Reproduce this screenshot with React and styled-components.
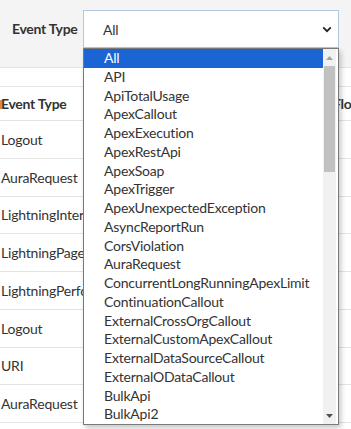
import React from "react";
import styled, { createGlobalStyle } from "styled-components";

const GlobalStyle = createGlobalStyle`
  html, body {
    margin: 0;
    padding: 0;
    background: #ffffff;
  }
  body {
    font-family: "Source Sans Pro", Lato, "Liberation Sans", sans-serif;
    color: #333333;
    overflow: hidden;
  }
`;

const options = [
  "All",
  "API",
  "ApiTotalUsage",
  "ApexCallout",
  "ApexExecution",
  "ApexRestApi",
  "ApexSoap",
  "ApexTrigger",
  "ApexUnexpectedException",
  "AsyncReportRun",
  "CorsViolation",
  "AuraRequest",
  "ConcurrentLongRunningApexLimit",
  "ContinuationCallout",
  "ExternalCrossOrgCallout",
  "ExternalCustomApexCallout",
  "ExternalDataSourceCallout",
  "ExternalODataCallout",
  "BulkApi",
  "BulkApi2",
];

const rows = [
  "Logout",
  "AuraRequest",
  "LightningInteraction",
  "LightningPageView",
  "LightningPerformance",
  "Logout",
  "URI",
  "AuraRequest",
];

const Chevron = () => (
  <svg width="10" height="7" viewBox="0 0 10 7">
    <path d="M1.2 1.4 L5 5.2 L8.8 1.4" fill="none" stroke="#222" strokeWidth="1.8" />
  </svg>
);

const Arrow = ({ down }) => (
  <svg width="7" height="4" viewBox="0 0 7 4">
    <path d={down ? "M0 0 L7 0 L3.5 4 Z" : "M0 4 L7 4 L3.5 0 Z"} fill={down ? "#505050" : "#a3a3a3"} />
  </svg>
);

const App = () => {
  return (
    <Page>
      <GlobalStyle />
      <FilterBar>
        <Label>Event Type</Label>
        <SelectWrap>
          <SelectBox>
            <span>All</span>
            <Chevron />
          </SelectBox>
          <OptionList>
            <Options>
              {options.map((o, i) => (
                <Option key={o} $selected={i === 0}>
                  {o}
                </Option>
              ))}
            </Options>
            <ScrollBar>
              <ScrollButton>
                <Arrow />
              </ScrollButton>
              <Track>
                <Thumb />
              </Track>
              <ScrollButton>
                <Arrow down />
              </ScrollButton>
            </ScrollBar>
          </OptionList>
        </SelectWrap>
      </FilterBar>
      <Spacer />
      <Table>
        <HeadRow>
          <HeadCell $marked>Event Type</HeadCell>
          <HeadCell />
          <HeadCell>Flow</HeadCell>
        </HeadRow>
        {rows.map((r, i) => (
          <Row key={i}>
            <Cell>{r}</Cell>
            <Cell />
            <Cell />
          </Row>
        ))}
      </Table>
    </Page>
  );
};

const Page = styled.div`
  width: 351px;
  height: 429px;
  overflow: hidden;
`;

const FilterBar = styled.div`
  height: 68px;
  box-sizing: border-box;
  padding: 10px 0 0 12px;
  display: flex;
  align-items: flex-start;
  gap: 5px;
  background: #f4f4f4;
  border-bottom: 1px solid #e3e3e3;
`;

const Label = styled.div`
  width: 66px;
  font-size: 14px;
  font-weight: 700;
  letter-spacing: -0.3px;
  line-height: 37px;
  white-space: nowrap;
  color: #333;
`;

const SelectWrap = styled.div`
  position: relative;
  z-index: 5;
`;

const SelectBox = styled.div`
  width: 256px;
  height: 38px;
  box-sizing: border-box;
  border: 1px solid #b3c8df;
  background: #fff;
  display: flex;
  align-items: center;
  justify-content: space-between;
  padding: 0 6px 0 19px;
  font-size: 14px;
  letter-spacing: -0.2px;
  color: #333;
`;

const OptionList = styled.div`
  position: absolute;
  top: 38px;
  left: 0;
  width: 256px;
  height: 377px;
  box-sizing: border-box;
  border: 1px solid #7a7a7a;
  background: #fff;
  display: flex;
  box-shadow: 2px 3px 5px rgba(0, 0, 0, 0.22);
`;

const Options = styled.div`
  flex: 1;
  overflow: hidden;
`;

const Option = styled.div`
  height: 18.75px;
  line-height: 18.75px;
  padding-left: 20px;
  font-size: 14px;
  letter-spacing: -0.2px;
  white-space: nowrap;
  color: ${(p) => (p.$selected ? "#fff" : "#333")};
  background: ${(p) => (p.$selected ? "#1b64d4" : "transparent")};
`;

const ScrollBar = styled.div`
  width: 13px;
  margin-right: 2px;
  background: #f1f1f1;
  display: flex;
  flex-direction: column;
`;

const ScrollButton = styled.div`
  height: 17px;
  display: flex;
  align-items: center;
  justify-content: center;
`;

const Track = styled.div`
  flex: 1;
  padding: 0 1px;
`;

const Thumb = styled.div`
  height: 106px;
  background: #c1c1c1;
`;

const Spacer = styled.div`
  height: 18px;
  border-bottom: 1px solid #e3e3e3;
`;

const Table = styled.div`
  display: flex;
  flex-direction: column;
`;

const HeadRow = styled.div`
  display: grid;
  grid-template-columns: 83px 249px 1fr;
  height: 33px;
  border-bottom: 1px solid #e3e3e3;
`;

const Row = styled.div`
  display: grid;
  grid-template-columns: 83px 249px 1fr;
  height: 36.75px;
  border-bottom: 1px solid #e3e3e3;
`;

const HeadCell = styled.div`
  position: relative;
  font-size: 14px;
  font-weight: 700;
  letter-spacing: -0.3px;
  display: flex;
  align-items: center;
  padding-left: 1px;
  white-space: nowrap;
  overflow: hidden;

  &::before {
    content: "";
    display: ${(p) => (p.$marked ? "block" : "none")};
    position: absolute;
    left: 0;
    top: 13px;
    width: 2px;
    height: 9px;
    background: #d98a3a;
  }
`;

const Cell = styled.div`
  font-size: 14px;
  letter-spacing: -0.2px;
  display: flex;
  align-items: center;
  padding-left: 1px;
  white-space: nowrap;
  overflow: hidden;
  color: #333;
`;

export default App;
